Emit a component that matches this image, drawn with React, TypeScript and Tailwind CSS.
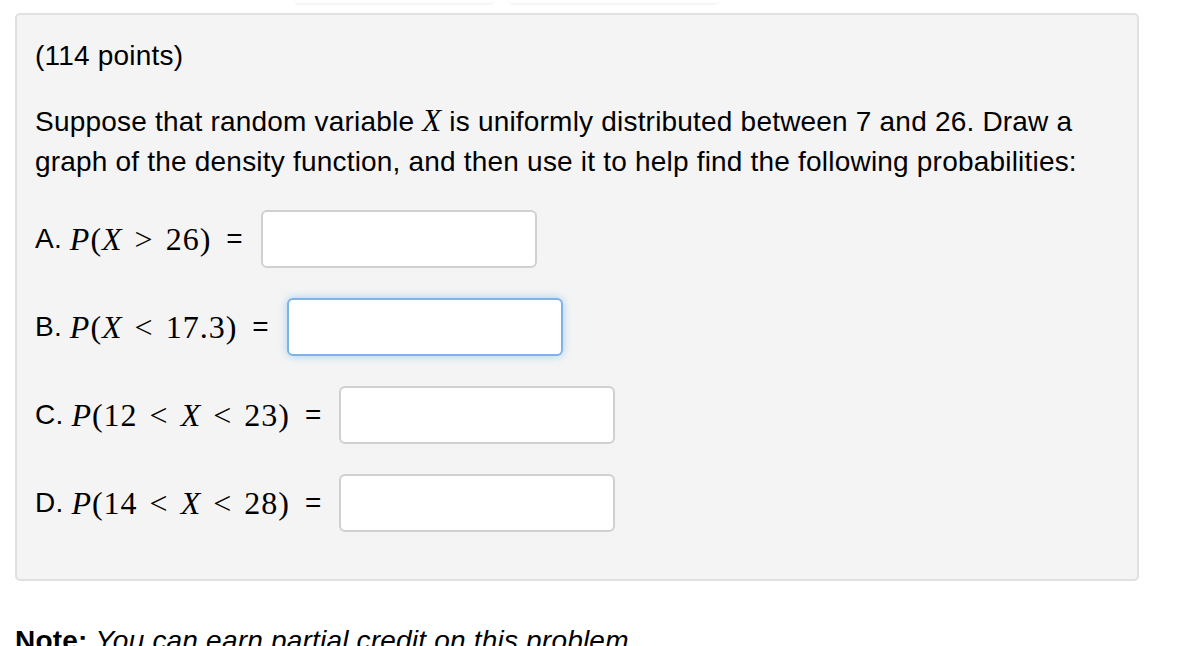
import React from "react";

const sans = { fontFamily: '"Liberation Sans", Arial, sans-serif' };

function Rel({ children }: { children: React.ReactNode }) {
  return <span className="mx-[12px]">{children}</span>;
}

function Row({
  label,
  math,
  focused,
}: {
  label: string;
  math: React.ReactNode;
  focused?: boolean;
}) {
  return (
    <div className="flex items-center h-[58px]">
      <span>{label}</span>
      <span className="ml-[8px] font-['Liberation_Serif',serif] text-[32px] tracking-[1px] whitespace-nowrap">
        {math}
      </span>
      <span className="ml-[15px]">=</span>
      <input
        type="text"
        className={
          "ml-[18px] w-[276px] h-[58px] rounded-[6px] bg-white outline-none " +
          (focused
            ? "border-2 border-[#7fb3e8] shadow-[0_0_8px_rgba(102,175,233,0.55)]"
            : "border-2 border-[#d0d0d0]")
        }
      />
    </div>
  );
}

export default function App() {
  return (
    <div
      className="w-[1204px] h-[646px] overflow-hidden bg-white text-black text-[28px] tracking-[0.2px]"
      style={sans}
    >
      <div className="flex h-[13px] items-start pl-[295px] gap-[16px]">
        <div className="w-[198px] h-[3px] rounded-b-md shadow-[0_1px_3px_rgba(0,0,0,0.08)]" />
        <div className="w-[210px] h-[3px] rounded-b-md shadow-[0_1px_3px_rgba(0,0,0,0.08)]" />
      </div>
      <div className="ml-[15px] w-[1124px] h-[568px] rounded-[5px] border-2 border-[#e0e0e0] bg-[#f4f4f4] pl-[18px] pr-[20px] pt-[21px]">
        <p className="leading-[40px]">(114 points)</p>
        <p className="mt-[25px] leading-[40px]">
          Suppose that random variable{" "}
          <span className="font-['Liberation_Serif',serif] italic text-[31px]">X</span> is uniformly
          distributed between 7 and 26. Draw a graph of the density function, and then use it to
          help find the following probabilities:
        </p>
        <div className="mt-[28px] flex flex-col gap-[30px]">
          <Row
            label="A."
            math={
              <>
                <i>P</i>(<i>X</i>
                <Rel>&gt;</Rel>26)
              </>
            }
          />
          <Row
            label="B."
            focused
            math={
              <>
                <i>P</i>(<i>X</i>
                <Rel>&lt;</Rel>17.3)
              </>
            }
          />
          <Row
            label="C."
            math={
              <>
                <i>P</i>(12<Rel>&lt;</Rel>
                <i>X</i>
                <Rel>&lt;</Rel>23)
              </>
            }
          />
          <Row
            label="D."
            math={
              <>
                <i>P</i>(14<Rel>&lt;</Rel>
                <i>X</i>
                <Rel>&lt;</Rel>28)
              </>
            }
          />
        </div>
      </div>
      <p className="ml-[15px] mt-[40px] leading-[40px]">
        <b>Note:</b> <i>You can earn partial credit on this problem.</i>
      </p>
    </div>
  );
}
